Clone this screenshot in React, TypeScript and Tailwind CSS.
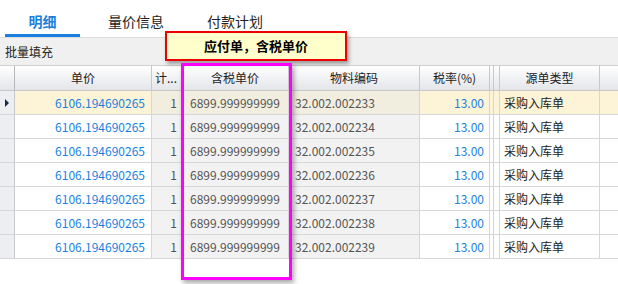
import React from "react";

const rows = ["233", "234", "235", "236", "237", "238", "239"];

const cols = "grid grid-cols-[15px_137px_30px_107px_131px_70px_4px_6px_100px_1fr]";

export default function App() {
    return (
        <div className="relative w-[618px] h-[284px] bg-white overflow-hidden text-[12px] text-[#222] font-['Microsoft_YaHei','Noto_Sans_CJK_SC',sans-serif]">
            {/* tabs */}
            <div className="flex h-[37px] items-end pl-[5px]">
                <div className="w-[75px] h-[37px] flex flex-col justify-end">
                    <div className="text-center text-[14px] font-bold text-[#1a7fe0] leading-none mb-[6px]">明细</div>
                    <div className="h-[3px] bg-[#1a7fe0]" />
                </div>
                <div className="ml-[28px] text-[14px] leading-none mb-[9px]">量价信息</div>
                <div className="ml-[43px] text-[14px] leading-none mb-[9px]">付款计划</div>
            </div>
            {/* toolbar */}
            <div className="h-[29px] bg-[#f0f0f0] border-t border-[#dcdcdc] border-b border-b-[#d0d0d0] flex items-center pl-[5px]">
                <span>批量填充</span>
            </div>
            {/* header */}
            <div className={`${cols} h-[25px] bg-gradient-to-b from-white to-[#e3e5e9] border-b border-[#c8c8c8]`}>
                <div className="border-r border-[#b8b8b8]" />
                <div className="border-r border-[#c8c8c8] flex items-center justify-center">单价</div>
                <div className="border-r border-[#c8c8c8] flex items-center pl-[3px]">计...</div>
                <div className="border-r border-[#c8c8c8] flex items-center justify-center">含税单价</div>
                <div className="border-r border-[#c8c8c8] flex items-center justify-center">物料编码</div>
                <div className="border-r border-[#c8c8c8] flex items-center justify-center">税率(%)</div>
                <div className="border-r border-[#c8c8c8]" />
                <div className="border-r border-[#c8c8c8]" />
                <div className="border-r border-[#c8c8c8] flex items-center justify-center">源单类型</div>
                <div />
            </div>
            {/* rows */}
            {rows.map((r, i) => {
                const sel = i === 0;
                const base = sel ? "bg-[#fdf3d6]" : "bg-white";
                const ro = sel ? "bg-[#f1eee0]" : "bg-[#f2f2f2]";
                return (
                    <div key={r} className={`${cols} h-[24px] border-b border-[#d6d6d6]`}>
                        <div className="bg-[#eceef2] border-r border-[#c8c8c8] flex items-center pl-[5px]">
                            {sel && <div className="w-0 h-0 border-y-[4px] border-y-transparent border-l-[4px] border-l-[#1b2a4a]" />}
                        </div>
                        <div className={`${base} border-r border-[#d6d6d6] flex items-center justify-end pr-[6px] text-[#1a7fe0]`}>6106.194690265</div>
                        <div className={`${ro} border-r border-[#d6d6d6] flex items-center justify-end pr-[4px] text-[#555]`}>1</div>
                        <div className={`${ro} border-r border-[#d6d6d6] flex items-center pl-[8px] text-[#555]`}>6899.999999999</div>
                        <div className={`${ro} border-r border-[#d6d6d6] flex items-center pl-[6px] text-[#555]`}>32.002.002{r}</div>
                        <div className={`${base} border-r border-[#d6d6d6] flex items-center justify-end pr-[5px] text-[#1a7fe0]`}>13.00</div>
                        <div className={`${base} border-r border-[#d6d6d6]`} />
                        <div className={`${base} border-r border-[#d6d6d6]`} />
                        <div className={`${base} border-r border-[#d6d6d6] flex items-center pl-[4px]`}>采购入库单</div>
                        <div className={base} />
                    </div>
                );
            })}
            {/* tooltip */}
            <div className="absolute left-[165px] top-[31px] w-[182px] h-[30px] bg-[#ffffcc] border-2 border-[#ee0000] shadow-[2px_3px_4px_rgba(0,0,0,0.35)] flex items-center justify-center font-bold text-[13px] text-black">
                应付单，含税单价
            </div>
            {/* highlight box */}
            <div className="absolute left-[181px] top-[63px] w-[111px] h-[217px] border-[3px] border-[#ff00ff] shadow-[2px_3px_5px_rgba(0,0,0,0.35)]" />
        </div>
    );
}
